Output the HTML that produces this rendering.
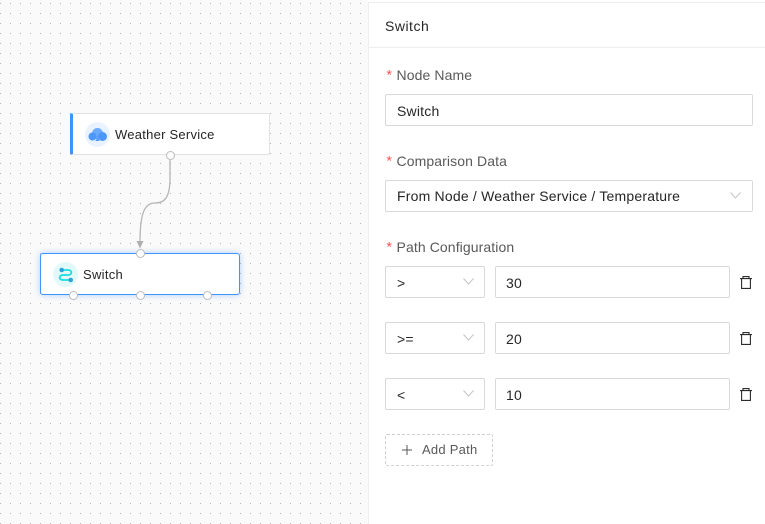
<!DOCTYPE html>
<html>
<head>
<meta charset="utf-8">
<style>
html,body{margin:0;padding:0;width:765px;height:524px;overflow:hidden;background:#fff;font-family:"Liberation Sans",sans-serif;color:#262626}
.a{position:absolute;box-sizing:border-box}
#canvas{left:0;top:0;width:368px;height:524px;background-color:#fafafa}
#panel{left:368px;top:2px;width:397px;height:522px;background:#fff;border-left:1px solid #eee;border-top:1px solid #eee}
.box{background:#fff;border:1px solid #d9d9d9;border-radius:2px}
.t{position:absolute;white-space:nowrap;font-size:14px;line-height:20px;letter-spacing:.2px}
.lab{color:#595959;letter-spacing:.1px}
.lab i{font-style:normal;color:#ff4d4f;margin-right:3px;font-family:"Liberation Mono",monospace}
.h{position:absolute;width:9px;height:9px;box-sizing:border-box;border-radius:50%;background:#fff;border:1px solid #bbb}
svg{position:absolute;overflow:visible}
</style>
</head>
<body>
<div class="a" id="canvas"></div>
<svg style="left:0;top:0;overflow:hidden" width="368" height="524">
<defs><pattern id="d" x="0" y="3" width="10" height="10" patternUnits="userSpaceOnUse"><rect width="1" height="1" fill="#b4b4b4"/></pattern></defs>
<rect width="368" height="524" fill="url(#d)" shape-rendering="crispEdges"/>
</svg>

<svg style="left:0;top:0" width="368" height="524" fill="none">
<path d="M170 155V178C170 197 165 203 155 203C145 203 140 212 140 242" stroke="#b5b5b5" stroke-width="1.300"/>
<path d="M136.500 241H143.500L140 248.500Z" fill="#b0b0b0"/>
</svg>

<div class="a" style="left:70px;top:113px;width:200px;height:42px;background:#fff;border:1px solid #e2e2e2;border-left:3px solid #3f95ff;border-radius:2px"></div>
<svg style="left:85px;top:122px" width="25" height="25">
<circle cx="12.500" cy="12.500" r="12.500" fill="#e9f3ff"/>
<circle cx="12.500" cy="11.500" r="5.500" fill="#6aabff"/>
<circle cx="7.500" cy="14.500" r="4" fill="#4d97fb"/>
<circle cx="17.500" cy="14.500" r="4.500" fill="#4d97fb"/>
<path d="M12.500 14C12 16 11.500 18 10 19H15C13.500 18 13 16 12.500 14Z" fill="#4d97fb"/>
</svg>
<div class="t" style="left:115px;top:125px;font-size:13px;letter-spacing:.25px">Weather Service</div>
<div class="h" style="left:166px;top:151px"></div>

<div class="a" style="left:40px;top:253px;width:200px;height:42px;background:#fff;border:1px solid #3f95ff;border-radius:3px;box-shadow:0 0 7px rgba(64,150,255,.4)"></div>
<svg style="left:53px;top:262px" width="25" height="25" fill="none">
<circle cx="12.500" cy="12.500" r="12.500" fill="#e2f9f9"/>
<path d="M9 8H15C19.500 8 19.500 13 15 13H10C5.500 13 5.500 18 10 18H18" stroke="#1adbe0" stroke-width="1.800"/>
<circle cx="8.700" cy="8" r="2.300" fill="#2aa5e0"/>
<circle cx="17.700" cy="18" r="2.300" fill="#2aa5e0"/>
</svg>
<div class="t" style="left:83px;top:265px;font-size:13px;letter-spacing:.3px">Switch</div>
<div class="h" style="left:136px;top:249px"></div>
<div class="h" style="left:69px;top:291px"></div>
<div class="h" style="left:136px;top:291px"></div>
<div class="h" style="left:203px;top:291px"></div>

<div class="a" id="panel"></div>
<div class="a" style="left:369px;top:47px;width:396px;height:1px;background:#eee"></div>
<div class="t" style="left:385px;top:16px;letter-spacing:.5px">Switch</div>

<div class="t lab" style="left:385px;top:65px"><i>*</i>Node Name</div>
<div class="a box" style="left:385px;top:94px;width:368px;height:32px"></div>
<div class="t" style="left:397px;top:101px">Switch</div>

<div class="t lab" style="left:385px;top:151px"><i>*</i>Comparison Data</div>
<div class="a box" style="left:385px;top:180px;width:368px;height:32px"></div>
<div class="t" style="left:397px;top:186px">From Node / Weather Service / Temperature</div>
<svg style="left:730px;top:192px" width="11" height="7" fill="none"><path d="M.5 .5L5.500 6L10.500 .5" stroke="#c4c4c4"/></svg>

<div class="t lab" style="left:385px;top:237px"><i>*</i>Path Configuration</div>

<div class="a box" style="left:385px;top:266px;width:100px;height:32px"></div>
<div class="t" style="left:397px;top:273px">&gt;</div>
<svg style="left:463px;top:278px" width="11" height="7" fill="none"><path d="M.5 .5L5.500 6L10.500 .5" stroke="#c4c4c4"/></svg>
<div class="a box" style="left:495px;top:266px;width:235px;height:32px"></div>
<div class="t" style="left:506px;top:273px">30</div>
<svg style="left:740px;top:276px" width="12" height="13" fill="none" stroke="#2b2b2b" stroke-width="1.100"><path d="M0 2.600H12M3 2.600V.6H9V2.600M1.600 2.600V12.400H10.400V2.600"/></svg>

<div class="a box" style="left:385px;top:322px;width:100px;height:32px"></div>
<div class="t" style="left:397px;top:329px">&gt;=</div>
<svg style="left:463px;top:334px" width="11" height="7" fill="none"><path d="M.5 .5L5.500 6L10.500 .5" stroke="#c4c4c4"/></svg>
<div class="a box" style="left:495px;top:322px;width:235px;height:32px"></div>
<div class="t" style="left:506px;top:329px">20</div>
<svg style="left:740px;top:332px" width="12" height="13" fill="none" stroke="#2b2b2b" stroke-width="1.100"><path d="M0 2.600H12M3 2.600V.6H9V2.600M1.600 2.600V12.400H10.400V2.600"/></svg>

<div class="a box" style="left:385px;top:378px;width:100px;height:32px"></div>
<div class="t" style="left:397px;top:385px">&lt;</div>
<svg style="left:463px;top:390px" width="11" height="7" fill="none"><path d="M.5 .5L5.500 6L10.500 .5" stroke="#c4c4c4"/></svg>
<div class="a box" style="left:495px;top:378px;width:235px;height:32px"></div>
<div class="t" style="left:506px;top:385px">10</div>
<svg style="left:740px;top:388px" width="12" height="13" fill="none" stroke="#2b2b2b" stroke-width="1.100"><path d="M0 2.600H12M3 2.600V.6H9V2.600M1.600 2.600V12.400H10.400V2.600"/></svg>

<div class="a" style="left:385px;top:434px;width:108px;height:32px;border:1px dashed #d0d0d0;border-radius:2px"></div>
<svg style="left:402px;top:445px" width="10" height="10" fill="none"><path d="M5 0V10M0 5H10" stroke="#555" stroke-width="1"/></svg>
<div class="t lab" style="left:422px;top:440px;font-size:13px;letter-spacing:.25px">Add Path</div>
</body>
</html>
